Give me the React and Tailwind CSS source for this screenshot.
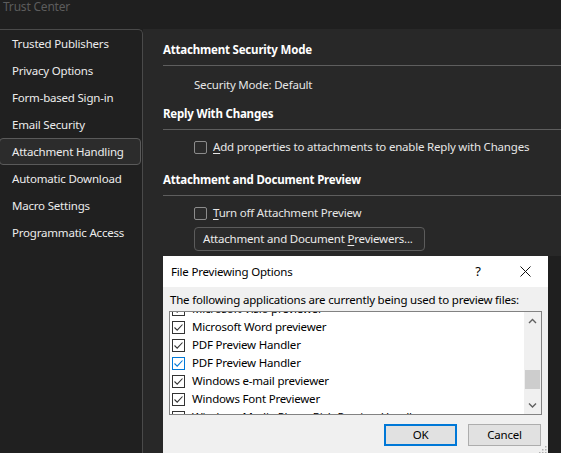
const navItems = [
  'Trusted Publishers',
  'Privacy Options',
  'Form-based Sign-in',
  'Email Security',
  'Attachment Handling',
  'Automatic Download',
  'Macro Settings',
  'Programmatic Access',
]

const previewers = [
  { label: 'Microsoft Visio previewer', checked: true },
  { label: 'Microsoft Word previewer', checked: true },
  { label: 'PDF Preview Handler', checked: true },
  { label: 'PDF Preview Handler', checked: true, focus: true },
  { label: 'Windows e-mail previewer', checked: true },
  { label: 'Windows Font Previewer', checked: true },
  { label: 'Windows Media Player Rich Preview Handler', checked: true },
]

function DarkCheck() {
  return <span className="w-[13px] h-[13px] rounded-[2px] border border-[#8c8c8c] bg-[#2b2b2b] flex-shrink-0" />
}

function WinCheck({ checked, focus }) {
  const c = focus ? '#0078d7' : '#333333'
  return (
    <span
      className={`w-[13px] h-[13px] border flex-shrink-0 bg-white flex items-center justify-center ${
        focus ? 'border-[#0078d7]' : 'border-[#333333]'
      }`}
    >
      {checked && (
        <svg width="11" height="11" viewBox="0 0 11 11">
          <path d="M1.5 5.5 L4.2 8.2 L9.5 2.5" fill="none" stroke={c} strokeWidth="1.1" />
        </svg>
      )}
    </span>
  )
}

function SectionHead({ children, className = '' }) {
  return (
    <div className={`border-b border-[#5e5e5e] pb-[7px] ${className}`}>
      <p className="leading-4 font-bold text-white">{children}</p>
    </div>
  )
}

export default function App() {
  return (
    <div
      className="relative w-[561px] h-[453px] overflow-hidden bg-[#1f1f1f] text-[11.5px] tracking-[-0.2px] flex flex-col whitespace-nowrap"
      style={{ fontFamily: '"Noto Sans", "Open Sans", sans-serif' }}
    >
      {/* Title */}
      <div className="h-[29px] flex-shrink-0 px-[3px] overflow-hidden">
        <p className="text-[#5c5c5c] text-[12px] leading-4 -mt-[1px]">Trust Center</p>
      </div>

      <div className="flex flex-1 min-h-0">
        {/* Sidebar */}
        <aside className="w-[143px] flex-shrink-0 border-t border-r border-[#4a4a4a] rounded-tr-[5px] bg-[#202020]">
          {navItems.map(item => (
            <div
              key={item}
              className={`h-[27px] flex items-center pl-[12px] text-[#ececec] ${
                item === 'Attachment Handling'
                  ? 'bg-[#2c2c2c] border border-[#5a5a5a] rounded-[4px] -ml-px mr-[1px]'
                  : ''
              }`}
            >
              {item}
            </div>
          ))}
        </aside>

        {/* Content */}
        <main className="flex-1 bg-[#282828] pl-[20px] pt-[13px] text-[#e6e6e6]">
          <SectionHead>Attachment Security Mode</SectionHead>
          <p className="leading-4 mt-[11px] pl-[31px]">Security Mode: Default</p>

          <SectionHead className="mt-[13px]">Reply With Changes</SectionHead>
          <div className="flex items-center gap-[6px] mt-[9px] pl-[31px] leading-4">
            <DarkCheck />
            <span>
              <span className="underline underline-offset-2">A</span>dd properties to attachments to enable Reply with Changes
            </span>
          </div>

          <SectionHead className="mt-[17px]">Attachment and Document Preview</SectionHead>
          <div className="flex items-center gap-[6px] mt-[9px] pl-[31px] leading-4">
            <DarkCheck />
            <span>
              <span className="underline underline-offset-2">T</span>urn off Attachment Preview
            </span>
          </div>
          <div className="pl-[31px] mt-[6px]">
            <button className="h-[24px] px-[8px] w-[231px] text-left border border-[#5c5c5c] rounded-[4px] bg-[#2b2b2b] text-[#ececec] tracking-[-0.2px]">
              Attachment and Document <span className="underline underline-offset-2">P</span>reviewers...
            </button>
          </div>
        </main>
      </div>

      {/* Dialog */}
      <div className="absolute left-[163px] top-[256px] w-[385px] h-[210px] bg-[#f0f0f0] flex flex-col text-black">
        <div className="h-[31px] bg-white flex items-center pl-[8px] flex-shrink-0">
          <span className="flex-1">File Previewing Options</span>
          <span className="w-[30px] mr-[9px] text-center text-[13px]">?</span>
          <span className="w-[46px] flex justify-center">
            <svg width="11" height="11" viewBox="0 0 11 11">
              <path d="M0.5 0.5 L10.5 10.5 M10.5 0.5 L0.5 10.5" stroke="#111" strokeWidth="1" />
            </svg>
          </span>
        </div>

        <div className="px-[6px] pt-[5px] flex flex-col">
          <p className="leading-4 pl-px">The following applications are currently being used to preview files:</p>

          <div className="mt-[3px] h-[104px] border border-[#828282] bg-white flex overflow-hidden">
            <div className="flex-1 overflow-hidden">
              <div className="-mt-[12px]">
                {previewers.map((p, i) => (
                  <div key={i} className="h-[18px] flex items-center pl-[2px] gap-[7px]">
                    <WinCheck checked={p.checked} focus={p.focus} />
                    <span className="leading-4">{p.label}</span>
                  </div>
                ))}
              </div>
            </div>
            <div className="w-[17px] bg-[#f0f0f0] flex flex-col items-center flex-shrink-0">
              <svg width="9" height="17" viewBox="0 0 9 17" className="mt-[1px]">
                <path d="M1 10 L4.5 6.5 L8 10" fill="none" stroke="#606060" strokeWidth="1.4" />
              </svg>
              <div className="mt-[40px] w-[15px] h-[19px] bg-[#cdcdcd]" />
              <div className="flex-1" />
              <svg width="9" height="17" viewBox="0 0 9 17">
                <path d="M1 6.5 L4.5 10 L8 6.5" fill="none" stroke="#606060" strokeWidth="1.4" />
              </svg>
            </div>
          </div>

          <div className="flex justify-end gap-[11px] mt-[9px] pr-[1px]">
            <button className="w-[73px] h-[22px] border-2 border-[#0078d7] bg-[#e1e1e1]">OK</button>
            <button className="w-[73px] h-[22px] border border-[#adadad] bg-[#e1e1e1]">Cancel</button>
          </div>
        </div>

        <svg width="8" height="8" viewBox="0 0 8 8" className="absolute right-[1px] top-[190px]">
          <rect x="6" y="0" width="1.5" height="1.5" fill="#b0b0b0" />
          <rect x="3" y="3" width="1.5" height="1.5" fill="#b0b0b0" />
          <rect x="6" y="3" width="1.5" height="1.5" fill="#b0b0b0" />
          <rect x="0" y="6" width="1.5" height="1.5" fill="#b0b0b0" />
          <rect x="3" y="6" width="1.5" height="1.5" fill="#b0b0b0" />
          <rect x="6" y="6" width="1.5" height="1.5" fill="#b0b0b0" />
        </svg>
      </div>

      {/* right strip beside dialog */}
      <div className="absolute left-[548px] top-[256px] w-[13px] h-[197px] bg-[#1f1f1f]" />
    </div>
  )
}
